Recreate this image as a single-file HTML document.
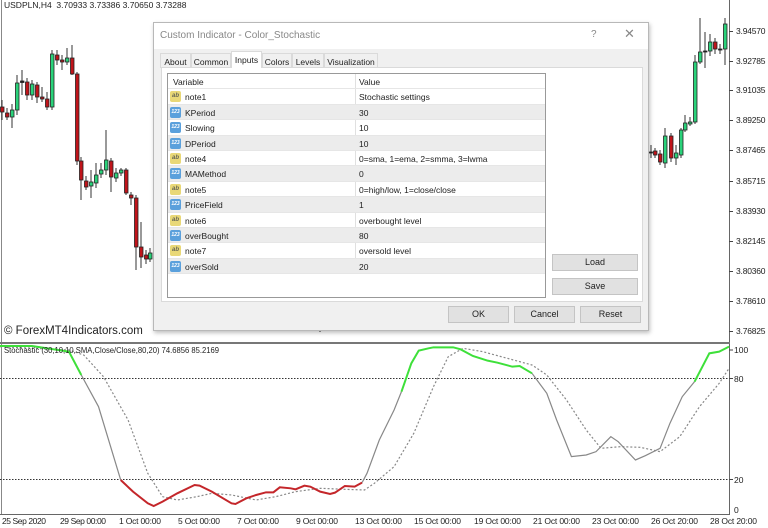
<!DOCTYPE html>
<html><head><meta charset="utf-8"><style>
*{margin:0;padding:0;box-sizing:border-box}
body{width:768px;height:528px;background:#fff;position:relative;overflow:hidden;font-family:"Liberation Sans",sans-serif;}
.abs{position:absolute}
.px{position:absolute;left:736px;font-size:8.5px;color:#222;letter-spacing:-0.2px}
.tk{position:absolute;left:729px;width:4px;height:1px;background:#444}
#dlg{position:absolute;left:153px;top:22px;width:496px;height:309px;background:#f0f0f0;border:1px solid #b8b8b8;box-shadow:1px 2px 4px rgba(0,0,0,.25)}
#ttl{position:absolute;left:0;top:0;width:100%;height:26px;background:#fff;font-size:10px;color:#888;padding:7px 0 0 6px}
.tab{position:absolute;top:30px;height:15px;font-size:8.5px;color:#222;padding-top:3px;text-align:center;white-space:nowrap;border:1px solid #dadada;border-bottom:none;background:#f0f0f0}
#pane{position:absolute;left:7px;top:44px;width:482px;height:235px;background:#fff;border:1px solid #dadada}
#grid{position:absolute;left:5px;top:5px;width:379px;height:225px;border:1px solid #999;background:#fff}
.row{position:absolute;left:0;width:377px;height:15.4px;font-size:8.5px;color:#222;border-bottom:1px solid #e6e6e6}
.row.g{background:#ececec}
.row span{position:absolute;top:3px}
.ic{position:absolute;left:2px;top:2px;width:11px;height:11px;border-radius:2px;font-size:6px;font-weight:bold;line-height:11px;text-align:center}
.ab{background:#e9d877;color:#665}
.n{background:#5aa0dc;color:#fff;font-size:5px}
.btn{position:absolute;height:17px;background:#e1e1e1;border:1px solid #c4c4c4;font-size:9px;color:#222;text-align:center;line-height:15px}
</style></head><body>

<div class="abs" style="left:1px;top:0;width:1px;height:514px;background:#888"></div>
<div class="abs" style="left:729px;top:0;width:1px;height:514px;background:#666"></div>
<div class="abs" style="left:0;top:342px;width:730px;height:2px;background:#777"></div>
<div class="abs" style="left:0;top:514px;width:730px;height:1px;background:#666"></div>

<div class="abs" style="left:4px;top:0px;font-size:8.5px;color:#222">USDPLN,H4&nbsp;&nbsp;3.70933 3.73386 3.70650 3.73288</div>

<svg class="abs" style="left:0;top:0" width="730" height="342">
<g stroke="#333" stroke-width="1">
<path d="M2 100V120M7 108V120M12 104V128M17 75V115M22 70V95M27 78V100M32 80V100M37 82V103M42 87V102M47 92V110M52 50V110M57 50V65M62 55V70M67 48V65M72 45V75M77 72V165M81 157V200M86 176V190M91 170V198M96 163V188M101 163V178M106 130V175M111 158V192M116 168V182M121 168V176M126 168V195M131 192V205M136 195V270M141 222V268M146 250V264M150 248V262M320 320V332M355 322V330M651 145V158M655 148V158M660 150V165M665 128V168M671 133V162M676 145V165M681 128V158M685 115V132M690 117V126M695 55V124M700 18V64M705 32V68M710 34V56M715 38V54M720 44V54M725 18V65"/>
</g>
<g stroke="#222" stroke-width=".8">
<rect x="0.5" y="107" width="3.5" height="5" fill="#c0141a"/>
<rect x="5.5" y="113" width="3.5" height="4" fill="#c0141a"/>
<rect x="10.5" y="110" width="3.5" height="7" fill="#2ad27a"/>
<rect x="15.5" y="83" width="3.5" height="27" fill="#2ad27a"/>
<rect x="20.5" y="81" width="3.5" height="1.5" fill="#222"/>
<rect x="25.5" y="82" width="3.5" height="13" fill="#c0141a"/>
<rect x="30.5" y="84" width="3.5" height="11" fill="#2ad27a"/>
<rect x="35.5" y="85" width="3.5" height="12" fill="#c0141a"/>
<rect x="40.5" y="97" width="3.5" height="2" fill="#c0141a"/>
<rect x="45.5" y="99" width="3.5" height="8" fill="#c0141a"/>
<rect x="50.5" y="54" width="3.5" height="53" fill="#2ad27a"/>
<rect x="55.5" y="55" width="3.5" height="5" fill="#c0141a"/>
<rect x="60.5" y="60" width="3.5" height="2" fill="#c0141a"/>
<rect x="65.5" y="58" width="3.5" height="4" fill="#2ad27a"/>
<rect x="70.5" y="58" width="3.5" height="16" fill="#c0141a"/>
<rect x="75.5" y="74" width="3.5" height="87" fill="#c0141a"/>
<rect x="79.5" y="161" width="3.5" height="19" fill="#c0141a"/>
<rect x="84.5" y="181" width="3.5" height="6" fill="#c0141a"/>
<rect x="89.5" y="182" width="3.5" height="4" fill="#2ad27a"/>
<rect x="94.5" y="175" width="3.5" height="8" fill="#2ad27a"/>
<rect x="99.5" y="170" width="3.5" height="4" fill="#2ad27a"/>
<rect x="104.5" y="160" width="3.5" height="10" fill="#2ad27a"/>
<rect x="109.5" y="161" width="3.5" height="16" fill="#c0141a"/>
<rect x="114.5" y="173" width="3.5" height="5" fill="#2ad27a"/>
<rect x="119.5" y="170" width="3.5" height="3" fill="#2ad27a"/>
<rect x="124.5" y="170" width="3.5" height="23" fill="#c0141a"/>
<rect x="129.5" y="195" width="3.5" height="3" fill="#c0141a"/>
<rect x="134.5" y="198" width="3.5" height="49" fill="#c0141a"/>
<rect x="139.5" y="247" width="3.5" height="10" fill="#c0141a"/>
<rect x="144.5" y="255" width="3.5" height="4" fill="#c0141a"/>
<rect x="148.5" y="253" width="3.5" height="6" fill="#2ad27a"/>
<rect x="319" y="320" width="2" height="3" fill="#c0141a"/>
<rect x="649.5" y="152" width="3" height="1" fill="#222"/>
<rect x="653.5" y="151" width="3.5" height="4" fill="#c0141a"/>
<rect x="658.5" y="154" width="3.5" height="8" fill="#c0141a"/>
<rect x="663.5" y="136" width="3.5" height="27" fill="#2ad27a"/>
<rect x="669.5" y="136" width="3.5" height="22" fill="#c0141a"/>
<rect x="674.5" y="153" width="3.5" height="5" fill="#2ad27a"/>
<rect x="679.5" y="130" width="3.5" height="25" fill="#2ad27a"/>
<rect x="683.5" y="123" width="3.5" height="7" fill="#2ad27a"/>
<rect x="688.5" y="122" width="3.5" height="2" fill="#2ad27a"/>
<rect x="693.5" y="62" width="3.5" height="60" fill="#2ad27a"/>
<rect x="698.5" y="52" width="3.5" height="10" fill="#2ad27a"/>
<rect x="703.5" y="51" width="3.5" height="1" fill="#222"/>
<rect x="708.5" y="42" width="3.5" height="9" fill="#2ad27a"/>
<rect x="713.5" y="42" width="3.5" height="7" fill="#c0141a"/>
<rect x="718.5" y="49" width="3.5" height="1" fill="#222"/>
<rect x="723.5" y="24" width="3.5" height="25" fill="#2ad27a"/>
</g>
</svg>

<div class="abs" style="left:4px;top:325px;font-size:11.5px;color:#222">© ForexMT4Indicators.com</div>

<div class="tk" style="top:31px"></div><div class="px" style="top:26px">3.94570</div>
<div class="tk" style="top:61px"></div><div class="px" style="top:56px">3.92785</div>
<div class="tk" style="top:90px"></div><div class="px" style="top:85px">3.91035</div>
<div class="tk" style="top:120px"></div><div class="px" style="top:115px">3.89250</div>
<div class="tk" style="top:150px"></div><div class="px" style="top:145px">3.87465</div>
<div class="tk" style="top:181px"></div><div class="px" style="top:176px">3.85715</div>
<div class="tk" style="top:211px"></div><div class="px" style="top:206px">3.83930</div>
<div class="tk" style="top:241px"></div><div class="px" style="top:236px">3.82145</div>
<div class="tk" style="top:271px"></div><div class="px" style="top:266px">3.80360</div>
<div class="tk" style="top:301px"></div><div class="px" style="top:296px">3.78610</div>
<div class="tk" style="top:331px"></div><div class="px" style="top:326px">3.76825</div>

<!-- indicator -->
<svg class="abs" style="left:0;top:320px" width="768" height="208">
<line x1="0" y1="58.5" x2="729" y2="58.5" stroke="#333" stroke-dasharray="1.5,1.5"/>
<line x1="0" y1="159.5" x2="729" y2="159.5" stroke="#333" stroke-dasharray="1.5,1.5"/>
<g transform="scale(0.4926,0.3333)" fill="none" stroke-width="1.2">
<polyline vector-effect="non-scaling-stroke" stroke="#888" stroke-dasharray="2,2" points="0,80 140,90 170,105 210,170 260,300 300,460 330,530 360,540 400,530 430,520 470,525 520,540 560,530 600,515 650,505 700,508 740,510 760,490 800,440 840,340 880,200 910,110 940,85 980,95 1030,115 1080,135 1110,165 1150,240 1190,330 1220,385 1260,380 1300,382 1340,395 1380,350 1420,260 1460,190 1480,145"/>
<polyline vector-effect="non-scaling-stroke" stroke="#888" points="165,165 200,260 245,480"/>
<polyline vector-effect="non-scaling-stroke" stroke="#888" points="735,488 745,460 770,360 790,300 800,270 815,215"/>
<polyline vector-effect="non-scaling-stroke" stroke="#888" points="1080,160 1110,220 1130,300 1160,410 1190,405 1210,395 1240,350 1255,365 1290,420 1310,407 1340,385 1360,310 1385,230 1410,185"/>
<polyline vector-effect="non-scaling-stroke" stroke="#3ee03a" stroke-width="2" points="0,78 65,78 140,95 165,165"/>
<polyline vector-effect="non-scaling-stroke" stroke="#3ee03a" stroke-width="2" points="815,215 835,130 850,92 870,85 880,82 920,82 935,88 960,108 990,122 1010,128 1040,140 1055,138 1080,160"/>
<polyline vector-effect="non-scaling-stroke" stroke="#3ee03a" stroke-width="2" points="1410,185 1440,100 1460,95 1480,80"/>
<polyline vector-effect="non-scaling-stroke" stroke="#c4262a" stroke-width="2" points="245,480 270,515 300,550 312,558 330,545 360,520 395,495 405,497 430,515 470,550 478,552 500,535 520,525 540,517 555,517 568,502 590,505 600,508 618,497 630,500 650,515 670,522 680,518 700,498 720,500 735,488"/>
</g>
<text x="4" y="33" font-size="8" fill="#222" font-family="Liberation Sans" textLength="215" lengthAdjust="spacingAndGlyphs">Stochastic (30,10,10,SMA,Close/Close,80,20) 74.6856 85.2169</text>
<line x1="729" y1="30" x2="733" y2="30" stroke="#444"/><line x1="729" y1="58.5" x2="733" y2="58.5" stroke="#444"/><line x1="729" y1="159.5" x2="733" y2="159.5" stroke="#444"/>
<g font-size="8.5" fill="#222" font-family="Liberation Sans">
<text x="734" y="33">100</text><text x="734" y="62">80</text><text x="734" y="163">20</text><text x="734" y="193">0</text>
</g>
<g font-size="8.5" fill="#222" font-family="Liberation Sans" lengthAdjust="spacingAndGlyphs">
<text x="2" y="204" textLength="44">25 Sep 2020</text>
<text x="60" y="204" textLength="46">29 Sep 00:00</text>
<text x="119" y="204" textLength="42">1 Oct 00:00</text>
<text x="178" y="204" textLength="42">5 Oct 00:00</text>
<text x="237" y="204" textLength="42">7 Oct 00:00</text>
<text x="296" y="204" textLength="42">9 Oct 00:00</text>
<text x="355" y="204" textLength="47">13 Oct 00:00</text>
<text x="414" y="204" textLength="47">15 Oct 00:00</text>
<text x="474" y="204" textLength="47">19 Oct 00:00</text>
<text x="533" y="204" textLength="47">21 Oct 00:00</text>
<text x="592" y="204" textLength="47">23 Oct 00:00</text>
<text x="651" y="204" textLength="47">26 Oct 20:00</text>
<text x="710" y="204" textLength="47">28 Oct 20:00</text>
</g>
</svg>

<div id="dlg">
<div id="ttl">Custom Indicator - Color_Stochastic<span style="position:absolute;left:437px;top:6px">?</span><span style="position:absolute;left:470px;top:3px;font-size:13px">✕</span></div>
<div class="tab" style="left:6px;width:31px">About</div>
<div class="tab" style="left:37px;width:40px">Common</div>
<div class="tab" style="left:77px;width:31px;top:28px;height:17px;padding-top:3px;background:#fff;z-index:2">Inputs</div>
<div class="tab" style="left:108px;width:30px">Colors</div>
<div class="tab" style="left:138px;width:32px">Levels</div>
<div class="tab" style="left:170px;width:54px">Visualization</div>
<div id="pane">
<div id="grid">
<div class="abs" style="left:187px;top:0;width:1px;height:200px;background:#e0e0e0"></div>
<div class="row" style="top:0"><span style="left:5px">Variable</span><span style="left:191px">Value</span></div>
<div class="row" style="top:15.4px"><i class="ic ab">ab</i><span style="left:17px">note1</span><span style="left:191px">Stochastic settings</span></div>
<div class="row g" style="top:30.8px"><i class="ic n">123</i><span style="left:17px">KPeriod</span><span style="left:191px">30</span></div>
<div class="row" style="top:46.2px"><i class="ic n">123</i><span style="left:17px">Slowing</span><span style="left:191px">10</span></div>
<div class="row g" style="top:61.6px"><i class="ic n">123</i><span style="left:17px">DPeriod</span><span style="left:191px">10</span></div>
<div class="row" style="top:77px"><i class="ic ab">ab</i><span style="left:17px">note4</span><span style="left:191px">0=sma, 1=ema, 2=smma, 3=lwma</span></div>
<div class="row g" style="top:92.4px"><i class="ic n">123</i><span style="left:17px">MAMethod</span><span style="left:191px">0</span></div>
<div class="row" style="top:107.8px"><i class="ic ab">ab</i><span style="left:17px">note5</span><span style="left:191px">0=high/low, 1=close/close</span></div>
<div class="row g" style="top:123.2px"><i class="ic n">123</i><span style="left:17px">PriceField</span><span style="left:191px">1</span></div>
<div class="row" style="top:138.6px"><i class="ic ab">ab</i><span style="left:17px">note6</span><span style="left:191px">overbought level</span></div>
<div class="row g" style="top:154px"><i class="ic n">123</i><span style="left:17px">overBought</span><span style="left:191px">80</span></div>
<div class="row" style="top:169.4px"><i class="ic ab">ab</i><span style="left:17px">note7</span><span style="left:191px">oversold level</span></div>
<div class="row g" style="top:184.8px"><i class="ic n">123</i><span style="left:17px">overSold</span><span style="left:191px">20</span></div>
</div>
<div class="btn" style="left:390px;top:186px;width:86px">Load</div>
<div class="btn" style="left:390px;top:210px;width:86px">Save</div>
</div>
<div class="btn" style="left:294px;top:283px;width:61px">OK</div>
<div class="btn" style="left:360px;top:283px;width:61px">Cancel</div>
<div class="btn" style="left:426px;top:283px;width:61px">Reset</div>
</div>
</body></html>
